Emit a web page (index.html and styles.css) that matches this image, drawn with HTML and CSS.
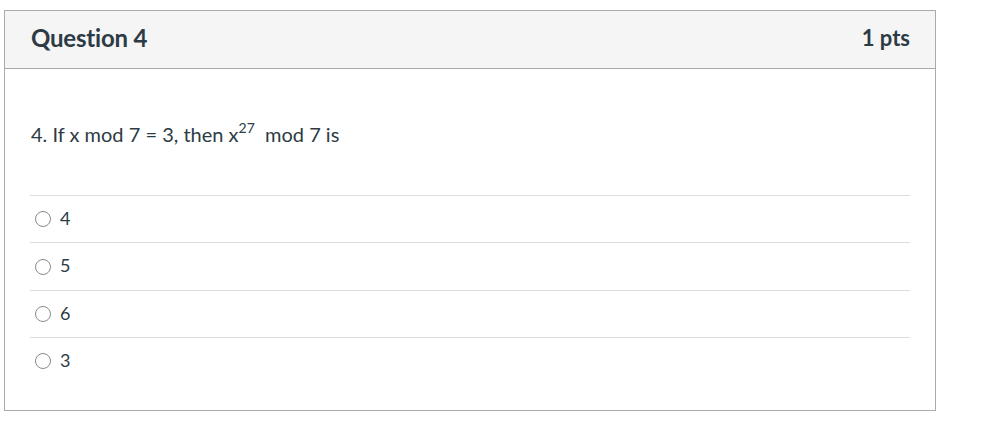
FILE: index.html
```html
<!DOCTYPE html>
<html>
<head>
<meta charset="utf-8">
<link rel="stylesheet" href="styles.css">
</head>
<body>
<div class="question">
  <div class="header">
    <span class="title">Question 4</span>
    <span class="pts">1 pts</span>
  </div>
  <div class="content">
    <div class="text">4. If x mod 7 = 3, then x<sup>27</sup>&nbsp; mod 7 is</div>
    <div class="answers">
      <label class="answer"><span class="radio"></span><span class="label">4</span></label>
      <label class="answer"><span class="radio"></span><span class="label">5</span></label>
      <label class="answer"><span class="radio"></span><span class="label">6</span></label>
      <label class="answer"><span class="radio"></span><span class="label">3</span></label>
    </div>
  </div>
</div>
</body>
</html>
```

FILE: styles.css
```css
html, body {
  margin: 0;
  padding: 0;
  background: #ffffff;
}
body {
  font-family: Lato, "Noto Sans", sans-serif;
  color: #2d3b45;
  padding: 10px 0 0 4px;
}
.question {
  border: 1px solid #aaaaaa;
  box-sizing: border-box;
  width: 932px;
}
.header {
  height: 58px;
  background: #f5f5f5;
  border-bottom: 1px solid #aaaaaa;
  display: flex;
  align-items: center;
  justify-content: space-between;
  padding: 0 25px 5px 26px;
  box-sizing: border-box;
}
.title {
  font-size: 24px;
  font-weight: 700;
  letter-spacing: -0.2px;
}
.pts {
  font-size: 22px;
  font-weight: 700;
}
.content {
  padding: 0 25px 0 25px;
  height: 341px;
}
.text {
  height: 126px;
  box-sizing: border-box;
  padding-top: 53px;
  padding-left: 1px;
  font-size: 20px;
  line-height: 24px;
}
.text sup {
  font-size: 14px;
  line-height: 0;
  vertical-align: 0;
  position: relative;
  top: -9px;
}
.answer {
  display: flex;
  align-items: center;
  border-top: 1px solid #dddddd;
  height: 47px;
  box-sizing: border-box;
  padding-left: 5px;
}
.answer:nth-child(2) { height: 48px; }
.radio {
  width: 16px;
  height: 16px;
  box-sizing: border-box;
  border: 1px solid #8a8a8a;
  border-radius: 50%;
  margin-right: 9px;
}
.label {
  font-size: 18px;
  color: #2d3b45;
  margin-bottom: 3px;
}
```
